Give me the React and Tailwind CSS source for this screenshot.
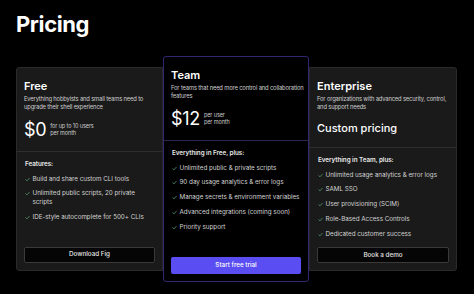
import React from 'react'

const font = { fontFamily: 'Inter, "Noto Sans", sans-serif' }

function Check() {
  return (
    <svg viewBox="0 0 10 10" className="w-[5px] h-[5px] shrink-0 mt-[2px]" fill="none">
      <path d="M1.5 5.4 L4 7.8 L8.6 2.4" stroke="#5aa57a" strokeWidth="1.4" strokeLinecap="round" strokeLinejoin="round" />
    </svg>
  )
}

function Features({ heading, items }) {
  return (
    <div className="pl-[8px] pr-[6px] pt-[8px]">
      <p className="text-[6.3px] leading-[8px] font-semibold tracking-[-0.05px] text-[#e8e8e8]">{heading}</p>
      <ul className="mt-[6.5px] flex flex-col gap-[5.8px]">
        {items.map((item) => (
          <li key={item} className="flex gap-[2.5px] text-[6.3px] leading-[9px] tracking-[-0.03px] text-[#d2d2d2]">
            <Check />
            <span>{item}</span>
          </li>
        ))}
      </ul>
    </div>
  )
}

export default function App() {
  return (
    <div className="w-[474px] h-[294px] bg-black text-white overflow-hidden" style={font}>
      <h1 className="pl-[16px] pt-[10px] text-[22px] leading-[28px] font-bold tracking-[-0.4px]">Pricing</h1>

      <div className="mt-[18px] ml-[16px] flex items-center">
        {/* Free */}
        <div className="w-[147px] h-[204px] flex flex-col bg-[#1a1a1a] border border-[#2a2a2a] rounded-l-[3px]">
          <div className="px-[7px] pt-[11px]">
            <h2 className="text-[11px] leading-[14px] font-semibold">Free</h2>
            <p className="mt-[2px] text-[5.8px] leading-[8px] tracking-[-0.15px] text-[#cfcfcf]">
              Everything hobbyists and small teams need to upgrade their shell experience
            </p>
            <div className="mt-[10px] flex items-center gap-[4px]">
              <span className="text-[18px] leading-[18px] font-normal tracking-[-0.3px]">$0</span>
              <span className="text-[5.5px] leading-[7px] tracking-[-0.1px] text-[#cfcfcf]">for up to 10 users<br />per month</span>
            </div>
          </div>
          <div className="mt-[12px] border-t border-[#2e2e2e]" />
          <Features
            heading="Features:"
            items={[
              'Build and share custom CLI tools',
              'Unlimited public scripts, 20 private scripts',
              'IDE-style autocomplete for 500+ CLIs',
            ]}
          />
          <div className="mt-auto px-[7px] pb-[7px]">
            <button className="w-full h-[16px] rounded-[2px] bg-[#050505] border border-[#3a3a3a] text-[6.3px] font-medium text-[#e5e5e5]">
              Download Fig
            </button>
          </div>
        </div>

        {/* Team */}
        <div className="w-[146px] h-[226px] flex flex-col bg-black border border-[#2f2870] rounded-[3px]">
          <div className="px-[7px] pt-[11px]">
            <h2 className="text-[11px] leading-[14px] font-semibold">Team</h2>
            <p className="mt-[2px] -mr-[5px] text-[5.8px] leading-[8px] tracking-[-0.15px] text-[#cfcfcf]">
              For teams that need more control and collaboration features
            </p>
            <div className="mt-[10px] flex items-center gap-[4px]">
              <span className="text-[18px] leading-[18px] font-normal tracking-[-0.3px]">$12</span>
              <span className="text-[5.5px] leading-[7px] tracking-[-0.1px] text-[#cfcfcf]">per user<br />per month</span>
            </div>
          </div>
          <div className="mt-[12px] border-t border-[#2a2650]" />
          <Features
            heading="Everything in Free, plus:"
            items={[
              'Unlimited public & private scripts',
              '90 day usage analytics & error logs',
              'Manage secrets & environment variables',
              'Advanced integrations (coming soon)',
              'Priority support',
            ]}
          />
          <div className="mt-auto px-[7px] pb-[7px]">
            <button className="w-full h-[17px] rounded-[2px] bg-[#5a4ef2] text-[6.3px] font-medium text-white">
              Start free trial
            </button>
          </div>
        </div>

        {/* Enterprise */}
        <div className="w-[148px] h-[204px] flex flex-col bg-[#1a1a1a] border border-[#2a2a2a] rounded-r-[3px]">
          <div className="px-[7px] pt-[11px]">
            <h2 className="text-[11px] leading-[14px] font-semibold">Enterprise</h2>
            <p className="mt-[2px] text-[5.8px] leading-[8px] tracking-[-0.15px] text-[#cfcfcf]">
              For organizations with advanced security, control, and support needs
            </p>
            <p className="mt-[10px] text-[11px] leading-[14px] font-medium">Custom pricing</p>
          </div>
          <div className="mt-[12px] border-t border-[#2e2e2e]" />
          <Features
            heading="Everything in Team, plus:"
            items={[
              'Unlimited usage analytics & error logs',
              'SAML SSO',
              'User provisioning (SCIM)',
              'Role-Based Access Controls',
              'Dedicated customer success',
            ]}
          />
          <div className="mt-auto px-[7px] pb-[7px]">
            <button className="w-full h-[16px] rounded-[2px] bg-[#050505] border border-[#3a3a3a] text-[6.3px] font-medium text-[#e5e5e5]">
              Book a demo
            </button>
          </div>
        </div>
      </div>
    </div>
  )
}
